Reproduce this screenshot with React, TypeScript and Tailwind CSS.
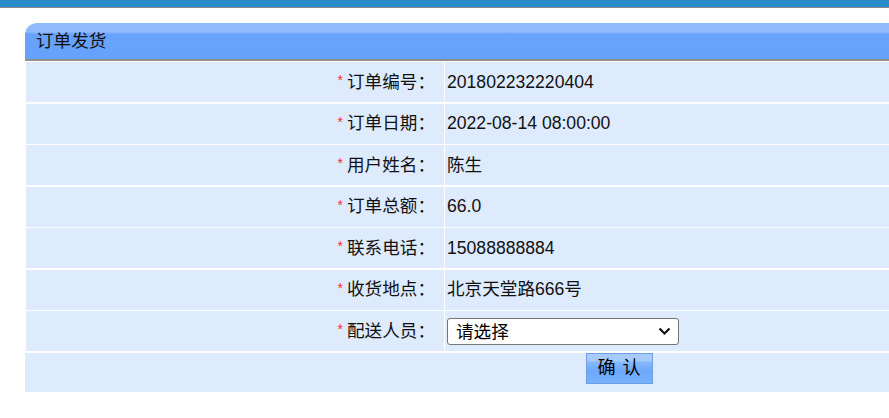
const rows = [
  { label: "订单编号：", value: "201802232220404" },
  { label: "订单日期：", value: "2022-08-14 08:00:00" },
  { label: "用户姓名：", value: "陈生" },
  { label: "订单总额：", value: "66.0" },
  { label: "联系电话：", value: "15088888884" },
  { label: "收货地点：", value: "北京天堂路666号" },
];

function Label({ text }: { text: string }) {
  return (
    <div className="w-[418px] h-full bg-[#deebfd] flex items-center justify-end pr-[9px]">
      <span className="text-[#ff2a2a] text-[14px] mr-[4px] -mt-[3px]">*</span>
      <span>{text}</span>
    </div>
  );
}

export default function App() {
  return (
    <div
      className="w-[889px] h-[418px] bg-white text-[17.6px] text-[#111] overflow-hidden"
      style={{ fontFamily: '"Liberation Sans", "Noto Sans CJK SC", sans-serif' }}
    >
      <div className="h-[8px] bg-[#2b8bc8] border-b border-[#8a8a8a]" />
      <div className="ml-[25px] mt-[15px]">
        {/* header */}
        <div className="h-[38px] rounded-tl-[12px] bg-[linear-gradient(to_bottom,#8fbafd_0px,#8fbafd_9px,#7eaefc_10px,#67a2fb_11px,#66a1fb_100%)] border-b-2 border-[#8e8e8e] flex items-center pl-[11px] text-[17.6px]">
          订单发货
        </div>
        <div className="flex flex-col gap-[1.5px] pt-[1px]">
          {rows.map((r) => (
            <div key={r.label} className="flex h-[40px] gap-[1px] pl-[1px]">
              <Label text={r.label} />
              <div className="flex-1 bg-[#deebfd] flex items-center pl-[2px]">{r.value}</div>
            </div>
          ))}
          <div className="flex h-[40px] gap-[1px] pl-[1px]">
            <Label text="配送人员：" />
            <div className="flex-1 bg-[#deebfd] flex items-center pl-[2px]">
              <div className="relative w-[232px] h-[27px]">
                <select className="appearance-none w-full h-full bg-white border border-[#767676] rounded-[3px] pl-[8px] text-[17.6px] text-black">
                  <option>请选择</option>
                </select>
                <svg
                  className="absolute right-[8px] top-[9px] pointer-events-none"
                  width="13"
                  height="9"
                  viewBox="0 0 13 9"
                >
                  <path d="M1.5 1.5 L6.5 6.5 L11.5 1.5" fill="none" stroke="#111" strokeWidth="2.2" />
                </svg>
              </div>
            </div>
          </div>
          <div className="h-[39px] bg-[#deebfd] pl-[561px]">
            <button className="w-[67px] h-[31px] border border-[#6c9fe6] bg-[linear-gradient(to_bottom,#a9cbfb_0px,#a9cbfb_7px,#86b8fb_8px,#6ea8fb_60%,#78b1fb_100%)] text-[18px] text-black tracking-[1px]">
              确 认
            </button>
          </div>
        </div>
      </div>
    </div>
  );
}
